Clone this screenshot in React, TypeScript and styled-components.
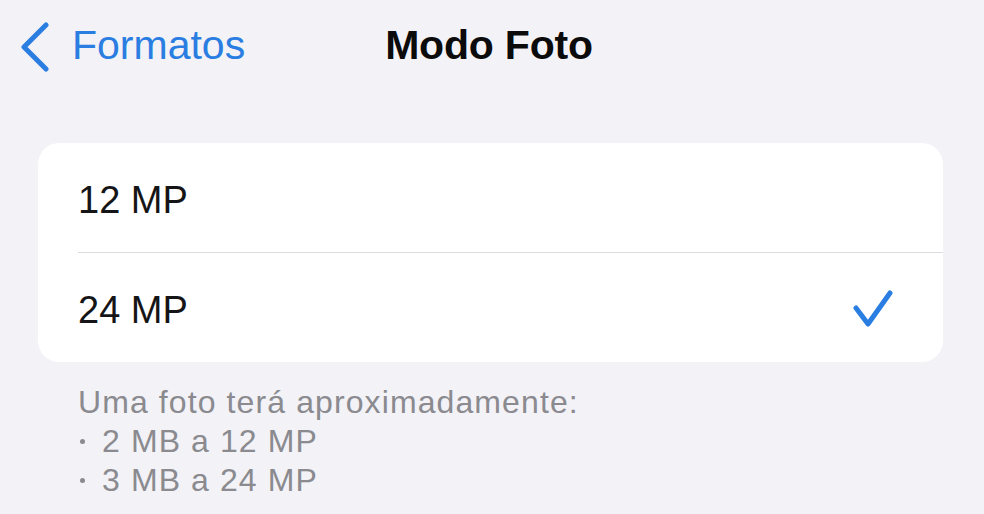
import React from "react";
import styled, { createGlobalStyle } from "styled-components";

const Global = createGlobalStyle`
  html, body { margin: 0; padding: 0; background: #f2f2f7; }
  body { font-family: "Liberation Sans", Arial, sans-serif; -webkit-font-smoothing: antialiased; }
`;

const Page = styled.div`
  width: 984px;
  height: 514px;
  background: #f2f2f7;
  overflow: hidden;
`;

const NavBar = styled.header`
  display: grid;
  grid-template-columns: 1fr auto 1fr;
  align-items: center;
  padding-top: 19px;
  height: 41px;
`;

const BackButton = styled.div`
  display: flex;
  align-items: center;
  gap: 22px;
  padding-left: 20px;
  color: #2a7de1;
  font-size: 41px;
  line-height: 41px;
`;

const Title = styled.h1`
  margin: 0 0 0 -6px;
  font-size: 41px;
  line-height: 41px;
  font-weight: 700;
  color: #0b0b0c;
  letter-spacing: -0.2px;
`;

const Card = styled.section`
  margin: 83px 41px 0 38px;
  background: #ffffff;
  border-radius: 21px;
  overflow: hidden;
`;

const Row = styled.div`
  padding-left: 40px;
`;

const RowInner = styled.div<{ $divider?: boolean }>`
  display: flex;
  align-items: center;
  justify-content: space-between;
  padding-top: 5px;
  box-sizing: border-box;
  height: ${(p) => (p.$divider ? "110px" : "109px")};
  padding-right: 50px;
  border-bottom: ${(p) => (p.$divider ? "1.5px solid #dcdce0" : "none")};
  font-size: 38px;
  color: #151517;
`;

const CheckWrap = styled.span`
  display: flex;
  margin-top: -3px;
`;

const Footer = styled.div`
  padding: 21px 0 0 78px;
  color: #8a8a8f;
  font-size: 32px;
  line-height: 39px;
  letter-spacing: 1.1px;
`;

const FooterLine = styled.div``;

const Bullet = styled.span`
  display: inline-block;
  width: 5px;
  height: 5px;
  border-radius: 50%;
  background: #8a8a8f;
  vertical-align: middle;
  margin: 0 17px 4px 2px;
`;

const Chevron = () => (
  <svg width="30" height="50" viewBox="0 0 30 50" style={{ marginTop: 3 }}>
    <path d="M26 3 L4 25 L26 47" fill="none" stroke="#2a7de1" strokeWidth="5" strokeLinecap="round" strokeLinejoin="round" />
  </svg>
);

const Check = () => (
  <svg width="40" height="38" viewBox="0 0 40 38">
    <path d="M3 18 L15 34 L37 3" fill="none" stroke="#2a7de1" strokeWidth="5" strokeLinecap="round" strokeLinejoin="round" />
  </svg>
);

const options = [
  { label: "12 MP", selected: false },
  { label: "24 MP", selected: true },
];

const sizes = ["2 MB a 12 MP", "3 MB a 24 MP"];

export default function App() {
  return (
    <Page>
      <Global />
      <NavBar>
        <BackButton>
          <Chevron />
          <span>Formatos</span>
        </BackButton>
        <Title>Modo Foto</Title>
        <div />
      </NavBar>
      <Card>
        {options.map((o, i) => (
          <Row key={o.label}>
            <RowInner $divider={i < options.length - 1}>
              <span>{o.label}</span>
              {o.selected && (
                <CheckWrap>
                  <Check />
                </CheckWrap>
              )}
            </RowInner>
          </Row>
        ))}
      </Card>
      <Footer>
        <FooterLine>Uma foto terá aproximadamente:</FooterLine>
        {sizes.map((s) => (
          <FooterLine key={s}>
            <Bullet />
            {s}
          </FooterLine>
        ))}
      </Footer>
    </Page>
  );
}
